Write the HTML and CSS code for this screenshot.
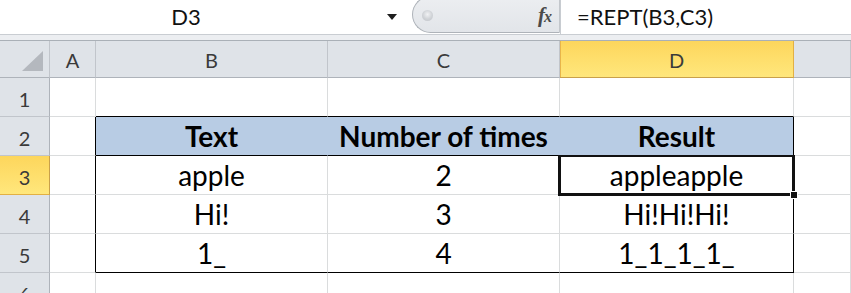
FILE: index.html
```html
<!DOCTYPE html>
<html lang="en">
<head>
    <meta charset="UTF-8">
    <title>REPT</title>
    <link rel="stylesheet" href="styles.css">
</head>
<body>

    <!-- Formulebalk -->
    <div class="formula-bar">
        <div class="name-box">D3</div>
        <div class="name-drop"><span class="arrow"></span></div>
        <div class="fx-box">
            <span class="grip"></span>
            <span class="fx"><i>f</i><i>x</i></span>
        </div>
        <div class="formula">=REPT(B3,C3)</div>
    </div>
    <div class="bar-sep"></div>

    <!-- Werkblad -->
    <div class="sheet">
        <div class="hd corner">
            <svg width="49" height="36" viewBox="0 0 49 36"><polygon points="43,10 43,30 22,30" fill="#b4b8be"/></svg>
        </div>
        <div class="hd">A</div>
        <div class="hd">B</div>
        <div class="hd">C</div>
        <div class="hd hd-sel">D</div>
        <div class="hd"></div>

        <div class="rh">1</div>
        <div class="c"></div>
        <div class="c edge-bottom"></div>
        <div class="c edge-bottom"></div>
        <div class="c edge-bottom"></div>
        <div class="c"></div>

        <div class="rh">2</div>
        <div class="c edge-right"></div>
        <div class="c th">Text</div>
        <div class="c th">Number of times</div>
        <div class="c th th-last">Result</div>
        <div class="c"></div>

        <div class="rh rh-sel">3</div>
        <div class="c edge-right"></div>
        <div class="c">apple</div>
        <div class="c">2</div>
        <div class="c edge-right active">appleapple</div>
        <div class="c"></div>

        <div class="rh">4</div>
        <div class="c edge-right"></div>
        <div class="c">Hi!</div>
        <div class="c">3</div>
        <div class="c edge-right">Hi!Hi!Hi!</div>
        <div class="c"></div>

        <div class="rh">5</div>
        <div class="c edge-right"></div>
        <div class="c edge-bottom">1_</div>
        <div class="c edge-bottom">4</div>
        <div class="c edge-right edge-bottom">1_1_1_1_</div>
        <div class="c"></div>

        <div class="rh">6</div>
        <div class="c"></div>
        <div class="c"></div>
        <div class="c"></div>
        <div class="c"></div>
        <div class="c"></div>
    </div>

</body>
</html>
```

FILE: styles.css
```css
body {
    margin: 0;
    background-color: #ffffff;
    font-family: Lato, "Open Sans", sans-serif;
    color: #000000;
    overflow: hidden;
    height: 293px;
}

/* Formulebalk bovenaan */
.formula-bar {
    display: flex;
    height: 34px;
    background-color: #ffffff;
    overflow: hidden;
}

.name-box {
    width: 372px;
    text-align: center;
    font-size: 22px;
    line-height: 34px;
    color: #111111;
}

.name-drop {
    width: 40px;
    display: flex;
    align-items: center;
    justify-content: center;
}

.arrow {
    width: 0;
    height: 0;
    border-left: 5px solid transparent;
    border-right: 5px solid transparent;
    border-top: 6px solid #1e1e1e;
    margin-top: -1px;
}

.fx-box {
    width: 148px;
    height: 37px;
    margin-top: -4px;
    box-sizing: border-box;
    border: 1px solid #aeb3b9;
    border-right-color: #c3c7cc;
    border-radius: 19px 0 0 19px;
    background: linear-gradient(#eceef1, #e2e5e9);
    display: flex;
    align-items: center;
    justify-content: space-between;
    padding: 4px 8px 0 9px;
}

.grip {
    width: 11px;
    height: 11px;
    border-radius: 50%;
    background: radial-gradient(circle at 50% 40%, #f1f2f4 0%, #cfd2d6 55%, #c2c5ca 100%);
    margin-top: -2px;
}

.fx {
    font-family: "Liberation Serif", serif;
    font-weight: bold;
    font-size: 21px;
    color: #4a4a4a;
    letter-spacing: -1px;
    margin-top: -2px;
}

.fx i:last-child {
    font-size: 16px;
}

.formula {
    flex: 1;
    font-size: 22px;
    line-height: 34px;
    padding-left: 16px;
    color: #111111;
    border-left: 1px solid #c8ccd1;
}

.bar-sep {
    height: 5px;
    border-top: 1px solid #c9cdd2;
    border-bottom: 1px solid #aab0b7;
    background-color: #eceef1;
}

/* Raster van het werkblad */
.sheet {
    display: grid;
    grid-template-columns: 50px 46px 232px 232px 234px 1fr;
    grid-template-rows: 37px repeat(6, 39px);
}

.hd {
    box-sizing: border-box;
    background-color: #dfe3e8;
    border-right: 1px solid #c1c5cb;
    border-bottom: 1px solid #aeb3ba;
    text-align: center;
    font-size: 20px;
    line-height: 34px;
    padding-top: 2px;
    color: #3a3a3a;
}

.corner {
    padding: 0;
    line-height: 0;
}

.hd-sel {
    background: linear-gradient(#fdd65c, #ffe77c);
    border-right-color: #e2b044;
    border-bottom-color: #c9a04a;
    box-shadow: inset 1px 0 0 #e8b54a;
}

.rh {
    box-sizing: border-box;
    background-color: #dfe3e8;
    border-right: 1px solid #aeb3ba;
    border-bottom: 1px solid #c1c5cb;
    text-align: center;
    font-size: 20px;
    line-height: 34px;
    padding-top: 4px;
    color: #3a3a3a;
}

.rh-sel {
    background: linear-gradient(#fdd65c, #ffe77c);
    border-right-color: #c9a04a;
    border-bottom-color: #e2b044;
}

.c {
    box-sizing: border-box;
    border-right: 1px solid #dadcdd;
    border-bottom: 1px solid #dadcdd;
    text-align: center;
    font-size: 28px;
    line-height: 38px;
    white-space: nowrap;
}

.edge-right {
    border-right-color: #000000;
}

.edge-bottom {
    border-bottom-color: #000000;
}

.th {
    background-color: #b8cce4;
    border-right-color: #b8cce4;
    border-bottom-color: #000000;
    font-weight: bold;
}

.th-last {
    border-right-color: #000000;
}

/* Actieve cel met vulgreep */
.active {
    position: relative;
}

.active::after {
    content: "";
    position: absolute;
    top: -1px;
    left: -2px;
    right: -2px;
    bottom: -2px;
    border: 3px solid #111111;
    border-top-width: 2px;
}

.active::before {
    content: "";
    position: absolute;
    right: -5px;
    bottom: -5px;
    width: 6px;
    height: 6px;
    background-color: #111111;
    border: 1px solid #ffffff;
    z-index: 2;
}
```
